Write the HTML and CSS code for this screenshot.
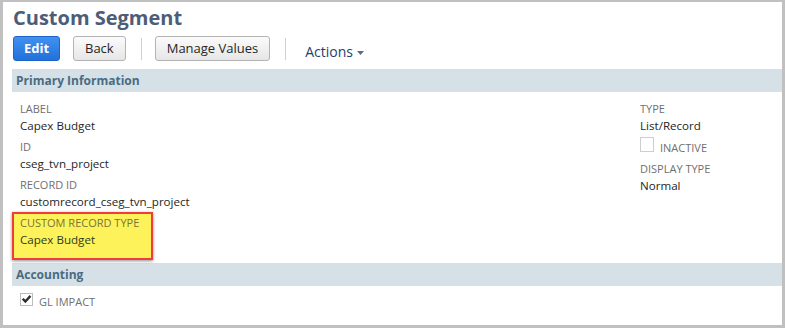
FILE: index.html
```html
<!DOCTYPE html>
<html lang="en">
<head>
<meta charset="utf-8">
<title>Custom Segment</title>
<link rel="stylesheet" href="styles.css">
</head>
<body>
<div class="frame">
  <div class="page">
    <h1 class="title">Custom Segment</h1>
    <div class="toolbar">
      <button class="btn btn-primary">Edit</button>
      <button class="btn">Back</button>
      <span class="sep"></span>
      <button class="btn">Manage Values</button>
      <span class="sep"></span>
      <span class="actions">Actions<svg class="caret" width="7" height="4" viewBox="0 0 7 4"><path d="M0 0 H7 L3.5 4 Z" fill="#5b6b80"/></svg></span>
    </div>

    <div class="section-head">Primary Information</div>
    <div class="section-body grid">
      <div class="col">
        <div class="field">
          <div class="label">Label</div>
          <div class="value">Capex Budget</div>
        </div>
        <div class="field">
          <div class="label">ID</div>
          <div class="value">cseg_tvn_project</div>
        </div>
        <div class="field">
          <div class="label">Record ID</div>
          <div class="value">customrecord_cseg_tvn_project</div>
        </div>
        <div class="highlight">
          <div class="field field-hl">
            <div class="label">Custom Record Type</div>
            <div class="value">Capex Budget</div>
          </div>
        </div>
      </div>
      <div class="col">
        <div class="field">
          <div class="label">Type</div>
          <div class="value">List/Record</div>
        </div>
        <div class="check-row inactive-row">
          <span class="checkbox checkbox-lg"></span>
          <span class="check-label">Inactive</span>
        </div>
        <div class="field">
          <div class="label">Display Type</div>
          <div class="value">Normal</div>
        </div>
      </div>
    </div>

    <div class="section-head section-head-tight">Accounting</div>
    <div class="section-body acct">
      <div class="check-row">
        <span class="checkbox"><svg width="11" height="11" viewBox="0 0 11 11"><path d="M0.8 5.6 L2.6 3.9 L4.4 5.8 L8.6 1 L10.3 2.7 L4.4 9.2 Z" fill="#2e2e2e"/></svg></span>
        <span class="check-label">GL Impact</span>
      </div>
    </div>
  </div>
</div>
</body>
</html>
```

FILE: styles.css
```css
* { box-sizing: border-box; }

html, body {
  margin: 0;
  padding: 0;
  background: #ffffff;
}

.frame {
  width: 785px;
  height: 328px;
  border: 3px solid #c0c0c0;
  border-top-width: 2px;
  background: #ffffff;
  font-family: "Open Sans", "Liberation Sans", Arial, sans-serif;
  overflow: hidden;
}

.page {
  padding-left: 9px;
}

.title {
  margin: 3px 0 0 0;
  padding-left: 1px;
  font-size: 20px;
  line-height: 26px;
  font-weight: 700;
  color: #4d5d77;
}

.toolbar {
  display: flex;
  align-items: flex-start;
  height: 25px;
  margin-top: 5px;
  padding-left: 1px;
}

.btn {
  height: 25px;
  padding: 0 11px;
  border: 1px solid #b3b3b3;
  border-radius: 3px;
  background: linear-gradient(#fbfbfb, #e6e6e6);
  font-family: inherit;
  font-size: 13px;
  line-height: 23px;
  color: #262626;
  margin-right: 13px;
  cursor: pointer;
}

.btn-primary {
  width: 47px;
  padding: 0;
  border-color: #1d64c8;
  background: linear-gradient(#4191f0, #2270dc);
  color: #ffffff;
  font-weight: 700;
}

.sep {
  width: 1px;
  height: 22px;
  margin-top: 2px;
  margin-right: 13px;
  margin-left: 2px;
  background: #cfcfcf;
}

.actions {
  display: flex;
  align-items: center;
  margin-left: 6px;
  padding-top: 4px;
  font-size: 14px;
  line-height: 24px;
  color: #253f6c;
}

.caret {
  margin-left: 4px;
  margin-top: 2px;
}

.section-head {
  height: 23px;
  margin-top: 8px;
  padding-left: 4px;
  background: #d5e1e7;
  font-size: 12px;
  font-weight: 700;
  line-height: 23px;
  color: #4a6b82;
}

.section-head-tight {
  margin-top: 3px;
}

.section-body {
  padding-left: 8px;
}

.grid {
  display: grid;
  grid-template-columns: 620px 1fr;
  padding-top: 9px;
}

.field {
  margin-bottom: 5px;
}

.label {
  font-size: 11px;
  line-height: 16px;
  text-transform: uppercase;
  color: #6f6f6f;
}

.value {
  font-size: 11.6px;
  line-height: 17px;
  color: #262626;
}

.highlight {
  width: 141px;
  margin-top: -3px;
  margin-left: -8px;
  padding: 1px 0 10px 6px;
  border: 2px solid #ef3d3d;
  background: #fdf25a;
  box-shadow: 0 1px 3px rgba(0, 0, 0, 0.45);
}

.field-hl {
  margin-bottom: 0;
}

.field-hl .label {
  color: #7a7235;
}

.field-hl .value {
  color: #2d3b1d;
}

.check-row {
  display: flex;
  align-items: flex-start;
}

.inactive-row {
  margin-top: -2px;
  margin-bottom: 5px;
}

.checkbox {
  display: flex;
  align-items: center;
  justify-content: center;
  width: 13px;
  height: 13px;
  border: 1px solid #bdbdbd;
  background: #ffffff;
}

.checkbox-lg {
  width: 14px;
  height: 15px;
  border-color: #cdcdcd;
}

.check-label {
  margin-left: 6px;
  padding-top: 1px;
  font-size: 11px;
  line-height: 16px;
  text-transform: uppercase;
  color: #6f6f6f;
}

.inactive-row .check-label {
  padding-top: 3px;
}

.acct {
  padding-top: 7px;
}
```
